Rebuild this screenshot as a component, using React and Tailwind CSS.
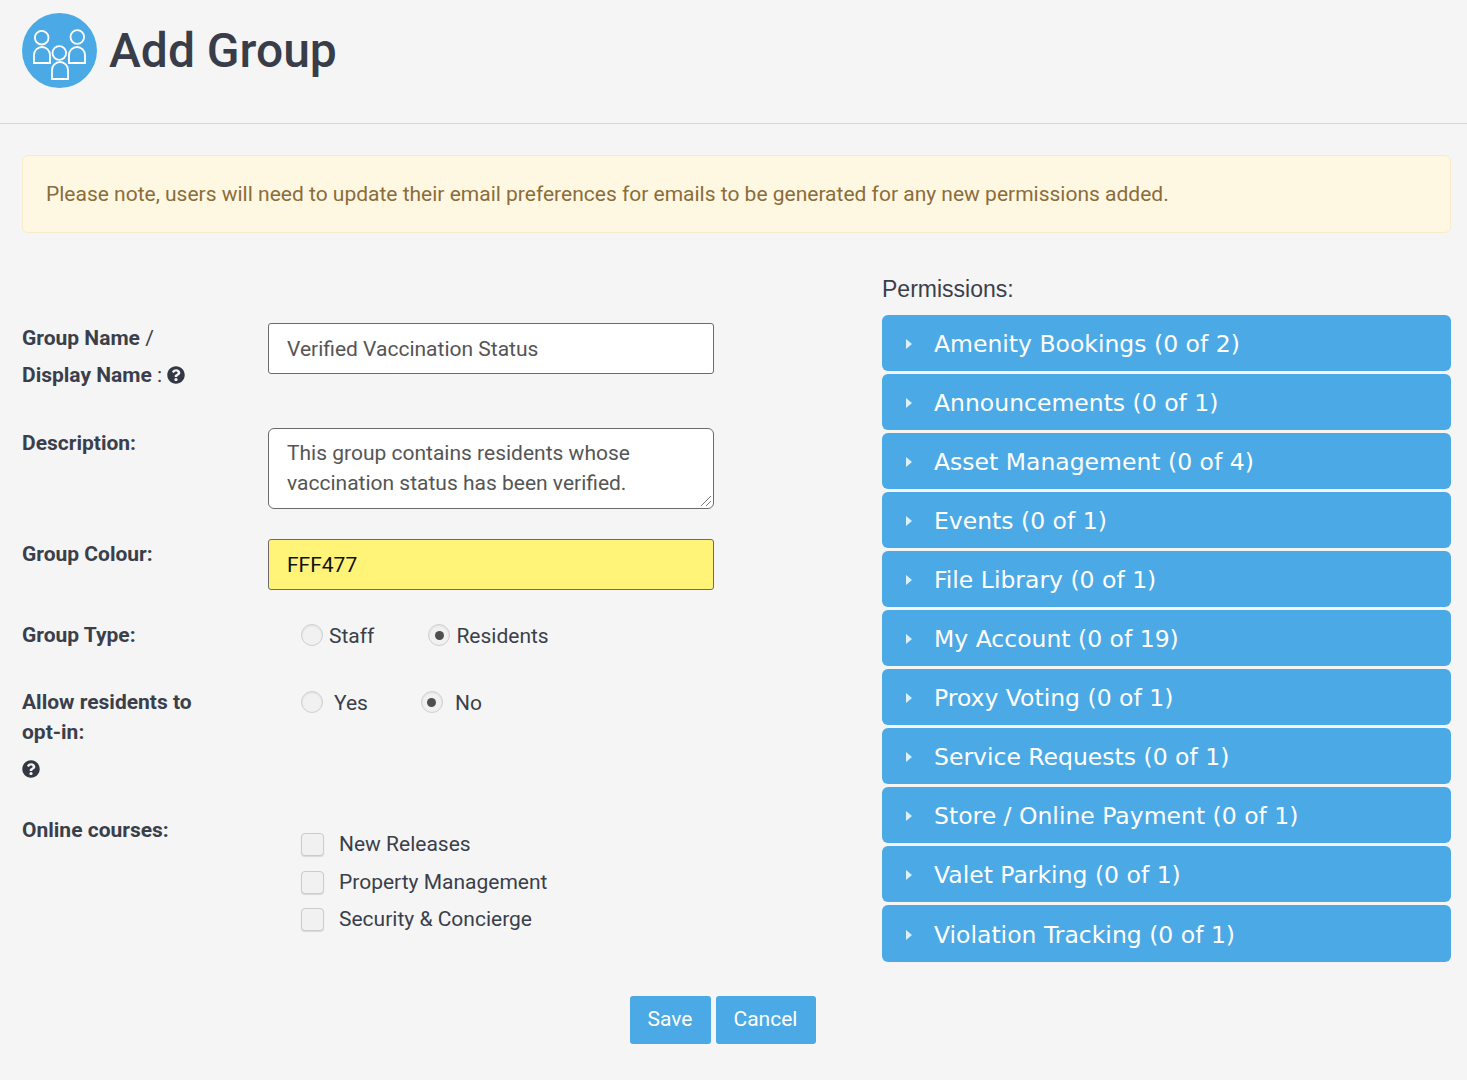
import { FaQuestionCircle } from "react-icons/fa";

const permissions = [
  "Amenity Bookings (0 of 2)",
  "Announcements (0 of 1)",
  "Asset Management (0 of 4)",
  "Events (0 of 1)",
  "File Library (0 of 1)",
  "My Account (0 of 19)",
  "Proxy Voting (0 of 1)",
  "Service Requests (0 of 1)",
  "Store / Online Payment (0 of 1)",
  "Valet Parking (0 of 1)",
  "Violation Tracking (0 of 1)",
];

function GroupIcon() {
  return (
    <svg viewBox="0 0 75 75" className="w-[75px] h-[75px] shrink-0">
      <circle cx="37.5" cy="37.5" r="37.5" fill="#4baae6" />
      <g fill="none" stroke="#fff" strokeWidth="1.8">
        <circle cx="19.7" cy="24.7" r="6.8" />
        <circle cx="55.3" cy="24" r="6.8" />
        <circle cx="37.3" cy="40" r="6.8" />
        <path d="M12 50V42a8 8 0 0 1 16 0v8z" />
        <path d="M47 50V42a8 8 0 0 1 16 0v8z" />
        <path d="M30 66V57a8 8 0 0 1 16 0v9z" />
      </g>
    </svg>
  );
}

function Radio({ checked }) {
  return (
    <span className="w-[22px] h-[22px] rounded-full border border-[#cfcfcf] bg-[#f1f1f1] shadow-[inset_0_1px_2px_rgba(0,0,0,0.08)] flex items-center justify-center shrink-0">
      {checked && <span className="w-[9px] h-[9px] rounded-full bg-[#4f4f4f]" />}
    </span>
  );
}

function Check({ label }) {
  return (
    <div className="flex items-center h-[37.5px]">
      <span className="w-[23px] h-[23px] rounded-[4px] border border-[#cccccc] bg-[#f1f1f1] shadow-[0_1px_1px_rgba(0,0,0,0.12)] shrink-0" />
      <span className="ml-[15px]">{label}</span>
    </div>
  );
}

export default function App() {
  return (
    <div className="min-h-[1080px] bg-[#f5f5f5] text-[#3a3f4b] text-[21px] font-['Roboto',sans-serif]">
      {/* Page title */}
      <div className="h-[124px] border-b border-[#d8d8d8] pl-[22px] pt-[13px] flex items-start">
        <GroupIcon />
        <h1 className="ml-[12px] text-[48px] leading-[75px] font-medium text-[#383d49]">Add Group</h1>
      </div>

      <div className="pl-[22px] pr-[16px]">
        <div className="mt-[31px] h-[78px] bg-[#fef8e2] border border-[#f8ecc8] rounded-[6px] px-[23px] pt-[2px] flex items-center text-[#8a6d3b]">
          Please note, users will need to update their email preferences for emails to be generated for any new permissions added.
        </div>

        <div className="flex">
          {/* Left form */}
          <div className="w-[860px] pt-[90px]">
            <div className="flex h-[105px]">
              <div className="w-[246px] font-bold leading-[37px] -mt-[3px]">
                Group Name <span className="font-normal">/</span>
                <br />
                Display Name <span className="font-normal">:</span>{" "}
                <FaQuestionCircle className="inline text-[18px] -mt-[3px] text-[#333844]" />
              </div>
              <div className="w-[446px] h-[51px] bg-white border border-[#6b6b6b] rounded-[3px] px-[18px] pt-[2px] flex items-center text-[#555]">
                Verified Vaccination Status
              </div>
            </div>

            <div className="flex h-[111px]">
              <div className="w-[246px] font-bold leading-[30px]">Description:</div>
              <div className="relative w-[446px] h-[81px] bg-white border border-[#6b6b6b] rounded-[6px] px-[18px] pt-[9px] leading-[30px] text-[#555]">
                This group contains residents whose
                <br />
                vaccination status has been verified.
                <svg viewBox="0 0 12 12" className="absolute right-[1px] bottom-[1px] w-[12px] h-[12px]">
                  <path d="M1 11L11 1M6 11L11 6" stroke="#777" strokeWidth="1" fill="none" />
                </svg>
              </div>
            </div>

            <div className="flex h-[81px]">
              <div className="w-[246px] font-bold leading-[30px]">Group Colour:</div>
              <div className="w-[446px] h-[51px] bg-[#fff477] border border-[#6b6b6b] rounded-[3px] px-[18px] pt-[2px] flex items-center text-[#111]">
                FFF477
              </div>
            </div>

            <div className="flex h-[67px]">
              <div className="w-[246px] font-bold leading-[30px]">Group Type:</div>
              <div className="flex items-start pl-[33px] h-[30px] leading-[30px]">
                <div className="flex items-center h-[30px]">
                  <Radio />
                  <span className="ml-[6px] pt-[1px]">Staff</span>
                </div>
                <div className="flex items-center h-[30px] ml-[54px]">
                  <Radio checked />
                  <span className="ml-[6px] pt-[1px]">Residents</span>
                </div>
              </div>
            </div>

            <div className="flex h-[128px]">
              <div className="w-[246px] font-bold leading-[30px]">
                Allow residents to
                <br />
                opt-in:
                <FaQuestionCircle className="block text-[18px] mt-[13px] text-[#333844]" />
              </div>
              <div className="flex items-start pl-[33px] h-[30px] leading-[30px]">
                <div className="flex items-center h-[30px]">
                  <Radio />
                  <span className="ml-[11px] pt-[1px]">Yes</span>
                </div>
                <div className="flex items-center h-[30px] ml-[53px]">
                  <Radio checked />
                  <span className="ml-[12px] pt-[1px]">No</span>
                </div>
              </div>
            </div>

            <div className="flex">
              <div className="w-[246px] font-bold leading-[30px]">Online courses:</div>
              <div className="pl-[33px] pt-[11px]">
                <Check label="New Releases" />
                <Check label="Property Management" />
                <Check label="Security & Concierge" />
              </div>
            </div>
          </div>

          {/* Permissions */}
          <div className="flex-1 pt-[40px]">
            <div className="leading-[30px] h-[42px] text-[23px] font-['Liberation_Sans',sans-serif] pt-[1px]">Permissions:</div>
            <div className="flex flex-col gap-[3px]">
              {permissions.map((p) => (
                <div key={p} className="h-[56px] last:h-[57px] bg-[#4baae6] rounded-[6px] flex items-center text-white text-[23.5px] font-['DejaVu_Sans',sans-serif] pl-[24px]">
                  <svg viewBox="0 0 6 10" className="w-[6px] h-[10px] mt-[2px] shrink-0">
                    <path d="M0 0L6 5L0 10Z" fill="#dcf0fb" />
                  </svg>
                  <span className="ml-[22px] pt-[4px]">{p}</span>
                </div>
              ))}
            </div>
          </div>
        </div>

        <div className="flex justify-center gap-[5px] mt-[34px] pr-[28px]">
          <button className="h-[48px] w-[81px] rounded-[3px] bg-[#4baae6] text-white">Save</button>
          <button className="h-[48px] w-[100px] rounded-[3px] bg-[#4baae6] text-white">Cancel</button>
        </div>
      </div>
    </div>
  );
}
